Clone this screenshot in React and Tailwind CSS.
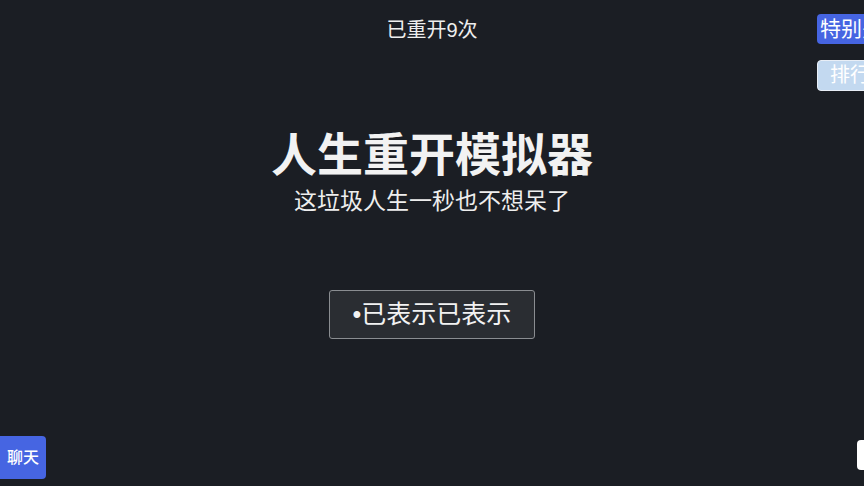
import React from "react";

const cjk = { fontFamily: '"Liberation Sans", "Noto Sans CJK SC", sans-serif' };

const App = () => {
  return (
    <div
      className="relative w-full h-screen overflow-hidden bg-[#1b1e24] text-white"
      style={cjk}
    >
      <div className="flex flex-col items-center">
        <div className="mt-[15px] text-[20px] leading-[30px] text-[#eeeeee]">已重开9次</div>

        <h1 className="mt-[82px] text-[46px] leading-[56px] font-bold text-[#f2f2f2]">
          人生重开模拟器
        </h1>
        <div className="mt-[1px] text-[23px] leading-[34px] text-[#eeeeee]">
          这垃圾人生一秒也不想呆了
        </div>

        <button className="mt-[72px] w-[206px] h-[49px] rounded-[3px] border border-[#8a8d91] bg-[#2a2d32] text-[25px] text-[#f2f2f2] flex items-center justify-center">
          •已表示已表示
        </button>
      </div>

      {/* fixed side buttons, partly off the right edge */}
      <div className="absolute left-[817px] top-[14px] flex flex-col items-start gap-[16px]">
        <button className="h-[30px] pl-[3px] pr-[6px] rounded-[4px] bg-[#4665e2] text-[21px] leading-[30px] text-white whitespace-nowrap">
          特别关注
        </button>
        <button className="h-[31px] pl-[12px] pr-[6px] rounded-[4px] border border-[#e8eef6] bg-[#c3d9f0] text-[20px] leading-[29px] text-white whitespace-nowrap">
          排行榜
        </button>
      </div>

      <button className="absolute left-0 bottom-[7px] w-[46px] h-[43px] rounded-r-[4px] bg-[#4665e2] text-[16px] font-medium text-white">
        聊天
      </button>

      <div className="absolute right-[-6px] bottom-[16px] w-[13px] h-[30px] rounded-[4px] bg-white" />
    </div>
  );
};

export default App;
